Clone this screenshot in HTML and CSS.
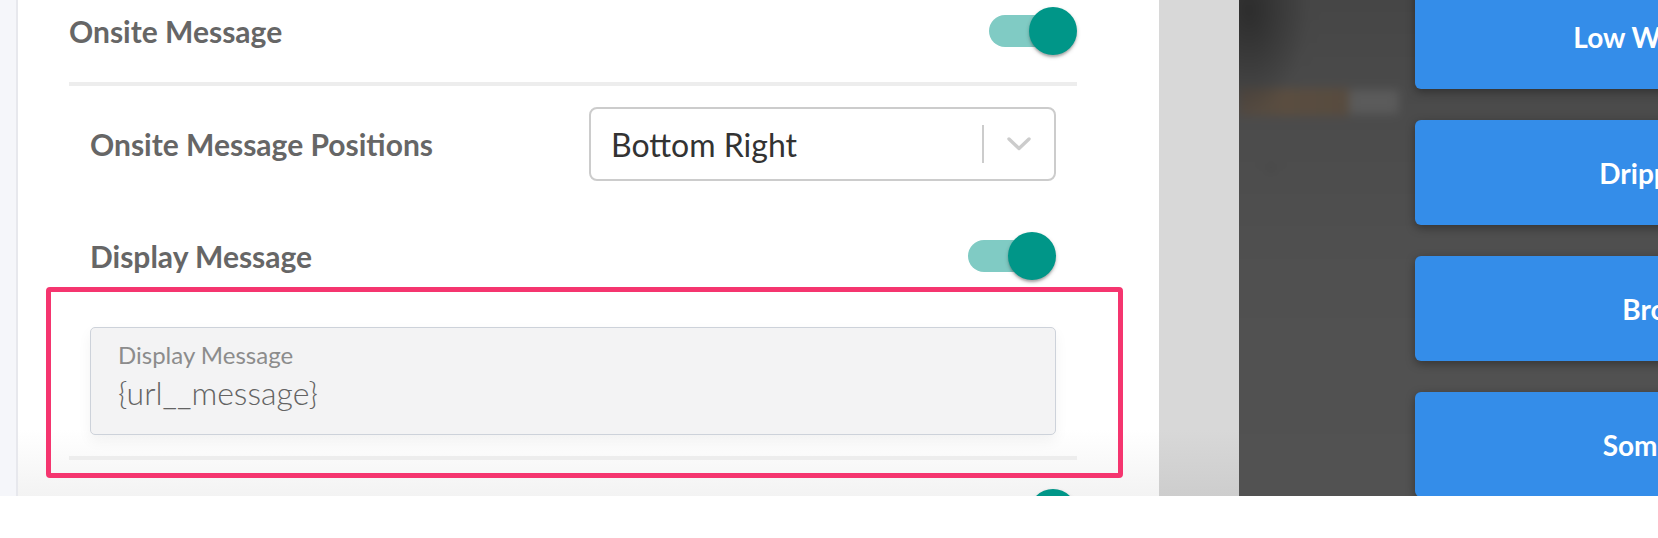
FILE: index.html
```html
<!DOCTYPE html>
<html>
<head>
<meta charset="utf-8">
<link rel="stylesheet" href="styles.css">
</head>
<body>
<div class="screen">
  <div class="edge"></div>
  <section class="panel">
    <div class="row row-main">
      <span class="heading">Onsite Message</span>
      <span class="switch"><span class="track"></span><span class="knob"></span></span>
    </div>
    <div class="divider"></div>
    <div class="group">
      <div class="row row-select">
        <span class="heading">Onsite Message Positions</span>
        <div class="select">
          <span class="select-value">Bottom Right</span>
          <span class="select-sep"></span>
          <span class="select-arrow">
            <svg width="24" height="14" viewBox="0 0 24 14"><polyline points="2,2 12,11.5 22,2" fill="none" stroke="#cccccc" stroke-width="3.4" stroke-linecap="round" stroke-linejoin="round"/></svg>
          </span>
        </div>
      </div>
      <div class="row row-toggle">
        <span class="heading">Display Message</span>
        <span class="switch"><span class="track"></span><span class="knob"></span></span>
      </div>
      <div class="field">
        <span class="field-label">Display Message</span>
        <span class="field-value">{url__message}</span>
      </div>
    </div>
    <div class="divider divider-low"></div>
    <div class="row row-main row-next">
      <span class="heading"></span>
      <span class="switch"><span class="track"></span><span class="knob"></span></span>
    </div>
    <div class="highlight"></div>
  </section>
  <div class="gutter"></div>
  <aside class="preview">
    <div class="photo"></div>
    <div class="choices">
      <div class="choice">Low Water Pressure</div>
      <div class="choice">Dripping Faucet</div>
      <div class="choice">Broken Pipe</div>
      <div class="choice">Something Else</div>
    </div>
  </aside>
</div>
</body>
</html>
```

FILE: styles.css
```css
* { box-sizing: border-box; }

html, body {
  margin: 0;
  padding: 0;
  background: #ffffff;
}

body {
  font-family: "Lato", "Liberation Sans", sans-serif;
}

.screen {
  display: flex;
  height: 496px;
  overflow: hidden;
}

.edge {
  width: 18px;
  flex: none;
  background: #f5f6fa;
  border-right: 2px solid #e7e8ed;
}

.panel {
  position: relative;
  width: 1141px;
  flex: none;
  padding: 0 82px 0 51px;
  background: linear-gradient(to bottom, #ffffff 0, #ffffff 430px, #f3f3f3 496px);
}

.row {
  display: flex;
  align-items: center;
  justify-content: space-between;
}

.row-main {
  height: 62px;
}

.heading {
  font-size: 30px;
  font-weight: 700;
  color: #666666;
}

.switch {
  display: flex;
  align-items: center;
  width: 88px;
  height: 48px;
  flex: none;
}

.track {
  width: 78px;
  height: 32px;
  border-radius: 16px;
  background: #80cbc4;
  flex: none;
}

.knob {
  width: 48px;
  height: 48px;
  margin-left: -38px;
  border-radius: 50%;
  background: #009688;
  flex: none;
  box-shadow: 0 2px 4px rgba(0, 0, 0, 0.2), 0 2px 2px rgba(0, 0, 0, 0.12), 0 4px 3px -2px rgba(0, 0, 0, 0.1);
}

.divider {
  margin-top: 20px;
  height: 4px;
  background: #ededed;
}

.divider-low {
  margin-top: 21px;
}

.group {
  padding: 21px 21px 0 21px;
}

.row-select {
  height: 74px;
}

.select {
  display: flex;
  align-items: center;
  width: 467px;
  height: 74px;
  border: 2px solid #cccccc;
  border-radius: 8px;
  background: #ffffff;
}

.select-value {
  flex: 1;
  padding-left: 20px;
  font-size: 32px;
  font-weight: 400;
  color: #333333;
}

.select-sep {
  width: 2px;
  height: 38px;
  background: #cccccc;
}

.select-arrow {
  width: 70px;
  display: flex;
  align-items: center;
  justify-content: center;
}

.row-toggle {
  margin-top: 51px;
  height: 48px;
}

.field {
  display: flex;
  flex-direction: column;
  margin-top: 47px;
  height: 108px;
  padding: 13px 27px 0 27px;
  background: #f3f3f4;
  border: 1px solid #cdd2da;
  border-radius: 5px;
  box-shadow: 0 6px 14px rgba(0, 0, 0, 0.05);
}

.field-label {
  font-size: 24px;
  font-weight: 400;
  color: #8c8c8c;
  line-height: 28px;
}

.field-value {
  margin-top: 4px;
  font-size: 32px;
  font-weight: 300;
  color: #636363;
  line-height: 40px;
}

.row-next {
  margin-top: 22px;
}

.highlight {
  position: absolute;
  left: 28px;
  top: 287px;
  width: 1077px;
  height: 191px;
  border: 5px solid #f5356f;
  border-radius: 4px;
  pointer-events: none;
}

.gutter {
  width: 80px;
  flex: none;
  background: linear-gradient(to bottom, #d8d8d8 0, #d8d8d8 430px, #cdcdcd 496px);
}

.preview {
  position: relative;
  flex: 1;
  overflow: hidden;
  background: #4e4e4e;
}

.photo {
  position: absolute;
  inset: -20px;
  filter: blur(5px);
  background:
    radial-gradient(ellipse 60px 100px at 30px 30px, #2c2c2c 0, rgba(44, 44, 44, 0) 100%),
    linear-gradient(to right, #514840, #5a4d40 40%, #574b3f) 20px 108px / 110px 28px no-repeat,
    linear-gradient(#5b5b5b, #5a5a5a) 130px 110px / 50px 24px no-repeat,
    radial-gradient(circle 4px at 52px 188px, #3a3a3a 0, rgba(58, 58, 58, 0) 100%),
    linear-gradient(to bottom, #454545 0, #4b4b4b 140px, #505050 300px, #525252 100%);
}

.choices {
  position: relative;
  display: flex;
  flex-direction: column;
  gap: 31px;
  margin-top: -16px;
  margin-left: 176px;
}

.choice {
  width: 566px;
  height: 105px;
  flex: none;
  display: flex;
  align-items: center;
  justify-content: center;
  background: #348de9;
  border-radius: 6px;
  color: #ffffff;
  font-family: "Lato", "Liberation Sans", sans-serif;
  font-weight: 700;
  font-size: 28px;
  box-shadow: 0 3px 10px rgba(0, 0, 0, 0.35);
}
```
